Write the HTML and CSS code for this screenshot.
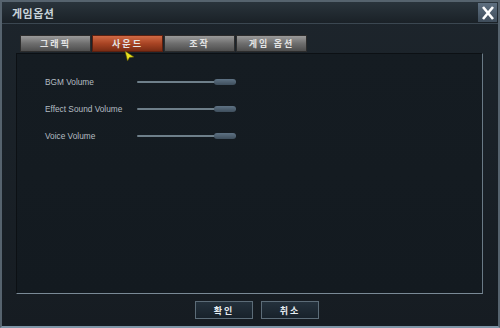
FILE: index.html
```html
<!DOCTYPE html>
<html lang="ko">

<head>
    <meta charset="UTF-8">
    <title>게임옵션</title>
    <link rel="stylesheet" href="styles.css">
</head>

<body>

    <div class="window">
        <div class="title-bar">
            <span class="title">게임옵션</span>
            <button class="close-btn">
                <svg width="14" height="14" viewBox="0 0 14 14">
                    <path d="M2 1 L12 13 M12 1 L2 13" stroke="#fff" stroke-width="2.6" />
                </svg>
            </button>
        </div>

        <div class="tabs">
            <div class="tab">그래픽</div>
            <div class="tab active">사운드</div>
            <div class="tab">조작</div>
            <div class="tab">게임 옵션</div>
        </div>

        <div class="panel">
            <div class="option-row">
                <span class="option-label">BGM Volume</span>
                <div class="slider"><div class="slider-thumb"></div></div>
            </div>
            <div class="option-row">
                <span class="option-label">Effect Sound Volume</span>
                <div class="slider"><div class="slider-thumb"></div></div>
            </div>
            <div class="option-row">
                <span class="option-label">Voice Volume</span>
                <div class="slider"><div class="slider-thumb"></div></div>
            </div>
        </div>

        <div class="footer">
            <button class="btn">확인</button>
            <button class="btn">취소</button>
        </div>

        <!-- mouse pointer over the tab -->
        <svg class="cursor" width="12" height="12" viewBox="0 0 12 12">
            <path d="M1 1 L10 7 L5.5 7.5 L3.5 11 Z" fill="#e8e020" stroke="#5a5400" stroke-width="0.6" />
        </svg>
    </div>

</body>

</html>
```

FILE: styles.css
```css
body {
    margin: 0;
    background-color: #11161b;
    font-family: "Noto Sans CJK KR", "Liberation Sans", sans-serif;
}

.window {
    position: relative;
    width: 500px;
    height: 328px;
    box-sizing: border-box;
    border: 2px solid #56636e;
    border-bottom-color: #7f96a8;
    background: linear-gradient(#1d252c, #161c22);
}

.title-bar {
    height: 21px;
    display: flex;
    align-items: center;
    justify-content: space-between;
    padding-left: 10px;
    padding-right: 1px;
    background: linear-gradient(#2a343c, #1a2127);
    border-bottom: 1px solid #3b4751;
}

.title {
    font-size: 11px;
    font-weight: bold;
    color: #c9d3da;
    letter-spacing: 0.5px;
}

.close-btn {
    width: 19px;
    height: 19px;
    padding: 0;
    border: none;
    background: linear-gradient(#5e6f80, #3f4d5b);
    display: flex;
    align-items: center;
    justify-content: center;
}

.tabs {
    display: flex;
    gap: 1px;
    margin-top: 11px;
    padding-left: 18px;
}

.tab {
    width: 69px;
    height: 15px;
    line-height: 15px;
    text-align: center;
    font-size: 9px;
    font-weight: bold;
    letter-spacing: 2px;
    color: #e4e4e4;
    background: linear-gradient(#9a9a9a, #6e6e6e 50%, #4e4e4e);
    border: 1px solid #2c2c2c;
    box-sizing: content-box;
}

.tab.active {
    background: linear-gradient(#d06a45, #a84424 50%, #7a2c14);
    border-color: #5a2010;
}

.panel {
    height: 241px;
    margin: 1px 15px 0 14px;
    box-sizing: border-box;
    border: 1px solid #0c1014;
    border-right-color: #6a7a86;
    border-bottom-color: #7a8a96;
    background: linear-gradient(#151c22, #131a20);
    padding-top: 22px;
    padding-left: 28px;
}

.option-row {
    display: flex;
    align-items: center;
    height: 12px;
    margin-bottom: 15px;
}

.option-label {
    width: 92px;
    font-family: "Liberation Sans", Arial, sans-serif;
    font-size: 8.3px;
    color: #b4bcc2;
}

.slider {
    position: relative;
    width: 99px;
    height: 2px;
    background-color: #6e7f8a;
    border-radius: 1px;
}

.slider-thumb {
    position: absolute;
    right: 0;
    top: -2px;
    width: 22px;
    height: 6px;
    border-radius: 3px;
    background: linear-gradient(#5e7284, #3e4e5c);
}

.footer {
    display: flex;
    justify-content: center;
    gap: 8px;
    padding-top: 7px;
    padding-left: 14px;
}

.btn {
    width: 58px;
    height: 18px;
    padding: 0;
    font-family: "Noto Sans CJK KR", sans-serif;
    font-size: 9px;
    font-weight: bold;
    letter-spacing: 2px;
    color: #e6ecf0;
    border: 1px solid #5c6c78;
    background: linear-gradient(#24313c, #18222b);
}

.cursor {
    position: absolute;
    left: 122px;
    top: 48px;
}
```
